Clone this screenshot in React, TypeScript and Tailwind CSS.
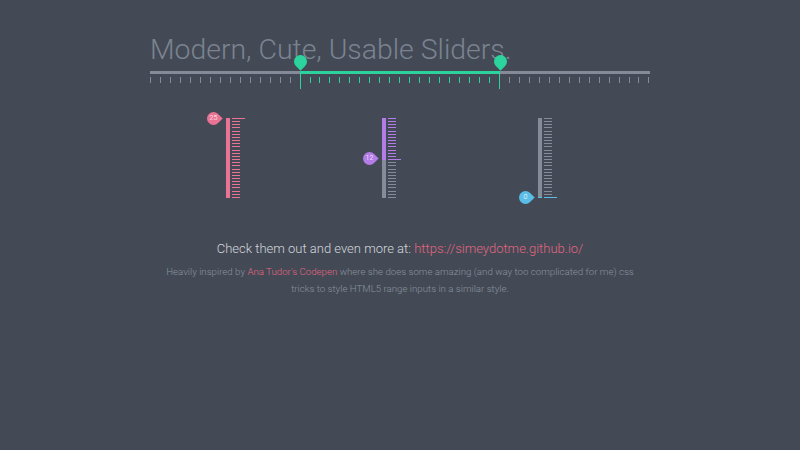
import React from "react";

const GRAY = "bg-[#858b98]";

function Drop({
  className,
  rot,
  label,
}: {
  className: string;
  rot: string;
  label?: string;
}) {
  // teardrop thumb: rounded square with one sharp corner, turned to point at the track
  return (
    <div className={`absolute h-[13px] w-[13px] ${className}`}>
      <div className={`absolute inset-0 rounded-[50%_50%_0_50%] ${rot}`} />
      {label && (
        <span className="absolute inset-0 flex items-center justify-center text-[7px] leading-none text-white">
          {label}
        </span>
      )}
    </div>
  );
}

function RangeSlider() {
  const ticks = Array.from({ length: 51 }, (_, i) => i);
  return (
    <div className="relative mt-[6px] w-[500px]">
      <div className={`flex h-[3px] ${GRAY}`}>
        <div className="ml-[150px] h-full w-[200px] bg-[#2dd39c]" />
      </div>
      <div className="mt-[3px] flex items-start justify-between">
        {ticks.map((i) => {
          const edge = i === 15 || i === 35;
          const on = i >= 15 && i <= 35;
          return (
            <div
              key={i}
              className={
                edge
                  ? "-mt-[3px] h-[15px] w-px bg-[#2dd39c]"
                  : on
                  ? "h-[6px] w-px bg-[#2dd39c]"
                  : `h-[6px] w-px ${GRAY}`
              }
            />
          );
        })}
      </div>
      <Drop className="-top-[16px] left-[144px] [&>div]:bg-[#2dd39c]" rot="rotate-45" />
      <Drop className="-top-[16px] left-[344px] [&>div]:bg-[#2dd39c]" rot="rotate-45" />
    </div>
  );
}

function VSlider({
  value,
  fillTop,
  color,
  thumb,
}: {
  value: number;
  fillTop: boolean;
  color: string;
  thumb: string;
}) {
  const ticks = Array.from({ length: 26 }, (_, i) => 25 - i);
  const pos = ((25 - value) / 25) * 79;
  const lit = (v: number) => (fillTop ? v >= value : v <= value);
  return (
    <div className="relative flex h-[80px] w-[156px] shrink-0">
      <div className={`flex h-full w-[4px] flex-col ${GRAY}`}>
        {fillTop ? (
          <div className={`w-full ${color}`} style={{ height: pos + 1 }} />
        ) : (
          <div className={`mt-auto w-full ${color}`} style={{ height: 80 - pos }} />
        )}
      </div>
      <div className="ml-[2px] flex h-full flex-col justify-between">
        {ticks.map((v) => (
          <div
            key={v}
            className={`h-px ${v === value ? "w-[13px]" : "w-[8px]"} ${
              v === value || (lit(v) && value > 0) ? color : GRAY
            }`}
          />
        ))}
      </div>
      <Drop className={`-left-[19px] ${thumb}`} rot="-rotate-45" label={String(value)} />
    </div>
  );
}

export default function App() {
  return (
    <div className="min-h-[450px] w-full bg-[#434a56] font-['Roboto',sans-serif] font-light">
      <div className="mx-auto flex w-[500px] flex-col pt-[35px]">
        <h1 className="text-[28.4px] leading-[30px] font-light text-[#7b8391]">
          Modern, Cute, Usable Sliders.
        </h1>
        <RangeSlider />
        <div className="mt-[29px] ml-[76px] flex">
          <VSlider value={25} fillTop={false} color="bg-[#ea7393]" thumb="top-[-6px] [&>div]:bg-[#ea7393]" />
          <VSlider value={12} fillTop={true} color="bg-[#b47ce6]" thumb="top-[34px] [&>div]:bg-[#b47ce6]" />
          <VSlider value={0} fillTop={false} color="bg-[#5bbde7]" thumb="top-[73px] [&>div]:bg-[#5bbde7]" />
        </div>
      </div>
      <p className="mt-[42px] text-center text-[13px] leading-[18px] text-[#d3d6db]">
        Check them out and even more at:{" "}
        <span className="text-[#e2667f]">https://simeydotme.github.io/</span>
      </p>
      <p className="mx-auto mt-[5px] max-w-[475px] text-center text-[9.7px] leading-[17px] text-[#8b929d]">
        Heavily inspired by <span className="text-[#e2667f]">Ana Tudor's Codepen</span> where she
        does some amazing (and way too complicated for me) css tricks to style HTML5 range inputs
        in a similar style.
      </p>
    </div>
  );
}
